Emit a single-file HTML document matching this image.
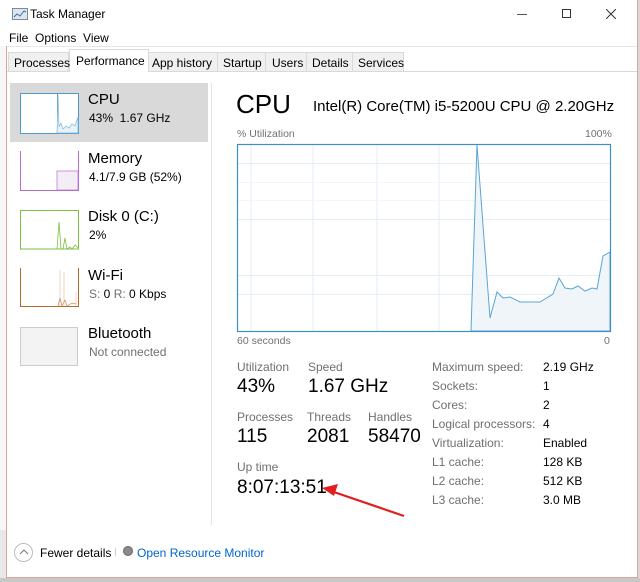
<!DOCTYPE html>
<html><head><meta charset="utf-8"><style>
*{margin:0;padding:0;box-sizing:border-box}
body{width:640px;height:582px;overflow:hidden;background:#fff;font-family:"Liberation Sans",sans-serif;color:#000;position:relative;font-size:12px}
.a{position:absolute;white-space:nowrap}
.g{color:#707070}
</style></head><body>
<!-- outside strips -->
<div class="a" style="left:0;top:46px;width:6px;height:484px;background:#f7f7f7"></div>
<div class="a" style="left:0;top:530px;width:6px;height:52px;background:#e8e8e8"></div>
<div class="a" style="left:6px;top:46px;width:1px;height:532px;background:#e2a595"></div>
<div class="a" style="left:637px;top:0;width:1px;height:578px;background:#e2a595"></div>
<div class="a" style="left:638px;top:0;width:2px;height:582px;background:#d8d8d8"></div>
<div class="a" style="left:6px;top:577px;width:632px;height:1px;background:#e2a595"></div>
<div class="a" style="left:0;top:578px;width:640px;height:4px;background:#c8c8c8"></div>
<!-- title bar -->
<svg class="a" style="left:12px;top:8px" width="16" height="12"><rect x="0.5" y="0.5" width="15" height="11" fill="#dde6ee" stroke="#7a8a99"/><polyline points="2,9 5,6 8,8 12,3 14,4" fill="none" stroke="#3a6ea5"/></svg>
<div class="a" style="left:30px;top:7px;font-size:12px">Task Manager</div>
<div class="a" style="left:517px;top:14px;width:10px;height:1px;background:#555"></div>
<div class="a" style="left:562px;top:9px;width:9px;height:9px;border:1px solid #333"></div>
<svg class="a" style="left:606px;top:9px" width="10" height="10"><path d="M0,0L10,10M10,0L0,10" stroke="#333" stroke-width="1"/></svg>
<div class="a" style="left:9px;top:31px">File&nbsp; Options&nbsp; View</div>
<!-- tabs -->
<div class="a" style="left:7px;top:46px;width:630px;height:1px;background:#e8e8e8"></div>
<div class="a" style="left:7px;top:71px;width:630px;height:1px;background:#d9d9d9"></div>
<div class="a" style="left:8px;top:52px;width:61px;height:19px;background:#f0f0f0;border:1px solid #d9d9d9;border-bottom:0"></div>
<div class="a" style="left:148px;top:52px;width:256px;height:19px;background:#f0f0f0;border:1px solid #d9d9d9;border-bottom:0"></div>
<div class="a" style="left:69px;top:49px;width:80px;height:23px;background:#fff;border:1px solid #d9d9d9;border-bottom:0"></div>
<div class="a" style="left:14px;top:56px">Processes</div>
<div class="a" style="left:76px;top:54px">Performance</div>
<div class="a" style="left:152px;top:56px">App history</div>
<div class="a" style="left:223px;top:56px">Startup</div>
<div class="a" style="left:272px;top:56px">Users</div>
<div class="a" style="left:312px;top:56px">Details</div>
<div class="a" style="left:358px;top:56px">Services</div>
<div class="a" style="left:148px;top:52px;width:1px;height:19px;background:#d9d9d9"></div>
<div class="a" style="left:217px;top:52px;width:1px;height:19px;background:#d9d9d9"></div>
<div class="a" style="left:265px;top:52px;width:1px;height:19px;background:#d9d9d9"></div>
<div class="a" style="left:306px;top:52px;width:1px;height:19px;background:#d9d9d9"></div>
<div class="a" style="left:352px;top:52px;width:1px;height:19px;background:#d9d9d9"></div>
<!-- sidebar -->
<div class="a" style="left:10px;top:83px;width:198px;height:59px;background:#d9d9d9"></div>
<div class="a" style="left:211px;top:83px;width:1px;height:442px;background:#e3e3e3"></div>
<svg class="a" style="left:20px;top:93px" width="59" height="41"><rect x="0.5" y="0.5" width="58" height="40" fill="#fff" stroke="#4a9bd0"/><line x1="37.5" y1="0" x2="37.5" y2="40" stroke="#4a9bd0"/><path d="M37,40L38,2L39,34L41,30L43,36L46,33L49,35L52,31L55,33L58,24L58,40Z" fill="#eaf2f9" stroke="#7ab4dc" stroke-width="0.7"/></svg>
<div class="a" style="left:88px;top:91px;font-size:15px">CPU</div>
<div class="a" style="left:89px;top:111px;font-size:12px">43%&nbsp; 1.67 GHz</div>
<svg class="a" style="left:20px;top:151px" width="59" height="40"><path d="M0.5,0V39.5H58.5V0" fill="none" stroke="#b76cd1"/><rect x="37" y="20" width="21" height="19" fill="#f3eef5" stroke="#b76cd1" stroke-width="0.7"/></svg>
<div class="a" style="left:88px;top:150px;font-size:15px">Memory</div>
<div class="a" style="left:89px;top:170px">4.1/7.9 GB (52%)</div>
<svg class="a" style="left:20px;top:210px" width="59" height="40"><rect x="0.5" y="0.5" width="58" height="38.5" fill="#fff" stroke="#7ac142"/><path d="M37,39L39,12L41,39L43,39L45,28L47,39L50,37L52,39L55,35L58,38" fill="none" stroke="#7ac142" stroke-width="0.8"/></svg>
<div class="a" style="left:88px;top:208px;font-size:15px">Disk 0 (C:)</div>
<div class="a" style="left:89px;top:228px">2%</div>
<svg class="a" style="left:20px;top:268px" width="59" height="40"><path d="M0.5,0V38.5H58.5V0" fill="none" stroke="#b06a2a"/><path d="M40,2V38M44,4V38M56,24V38" stroke="#e8c3a6" stroke-width="0.7"/><path d="M38,38L40,30L42,38L45,32L47,38L52,35L56,36" fill="none" stroke="#c98a5a" stroke-width="0.7"/></svg>
<div class="a" style="left:88px;top:267px;font-size:15px">Wi-Fi</div>
<div class="a" style="left:89px;top:287px"><span class="g">S:</span> 0 <span class="g">R:</span> 0 Kbps</div>
<div class="a" style="left:20px;top:327px;width:58px;height:39px;background:#f3f3f3;border:1px solid #ccc"></div>
<div class="a" style="left:88px;top:325px;font-size:15px">Bluetooth</div>
<div class="a g" style="left:89px;top:345px">Not connected</div>
<!-- main -->
<div class="a" style="left:236px;top:89px;font-size:26px">CPU</div>
<div class="a" style="left:313px;top:98px;font-size:15px">Intel(R) Core(TM) i5-5200U CPU @ 2.20GHz</div>
<div class="a g" style="left:237px;top:128px;font-size:10.5px">% Utilization</div>
<div class="a g" style="left:585px;top:128px;font-size:10.5px">100%</div>
<svg class="a" style="left:236px;top:143px" width="376" height="190">
<g stroke="#e4eef6" stroke-width="1">
<line x1="15" y1="1" x2="15" y2="188"/><line x1="77" y1="1" x2="77" y2="188"/><line x1="141" y1="1" x2="141" y2="188"/><line x1="203" y1="1" x2="203" y2="188"/>
<line x1="1" y1="20.5" x2="374" y2="20.5"/><line x1="1" y1="76.5" x2="374" y2="76.5"/><line x1="1" y1="132.5" x2="374" y2="132.5"/><line x1="1" y1="151.5" x2="374" y2="151.5"/>
<line x1="1" y1="39.5" x2="374" y2="39.5" stroke="#f1f6fa"/><line x1="1" y1="57.5" x2="374" y2="57.5" stroke="#f1f6fa"/>
</g>
<path d="M235,188L241,2L254,175L261,149L267,155L274,154L284,159L304,159L317,151L323,135L329,145L336,146L342,143L349,148L356,145L361,146L367,113L374,109L374,188Z" fill="#f0f5fa" stroke="#5aa5d6" stroke-width="1"/>
<rect x="1.5" y="1.5" width="373" height="187" fill="none" stroke="#3d8fc7" stroke-width="1.2"/>
</svg>
<div class="a g" style="left:237px;top:335px;font-size:10.5px">60 seconds</div>
<div class="a g" style="left:604px;top:335px;font-size:10.5px">0</div>

<div class="a g" style="left:237px;top:360px">Utilization</div>
<div class="a g" style="left:308px;top:360px">Speed</div>
<div class="a" style="left:237px;top:376px;font-size:19px">43%</div>
<div class="a" style="left:308px;top:376px;font-size:19px">1.67 GHz</div>
<div class="a g" style="left:237px;top:410px">Processes</div>
<div class="a g" style="left:307px;top:410px">Threads</div>
<div class="a g" style="left:368px;top:410px">Handles</div>
<div class="a" style="left:237px;top:426px;font-size:19px">115</div>
<div class="a" style="left:307px;top:426px;font-size:19px">2081</div>
<div class="a" style="left:368px;top:426px;font-size:19px">58470</div>
<div class="a g" style="left:237px;top:460px">Up time</div>
<div class="a" style="left:237px;top:477px;font-size:19px">8:07:13:51</div>
<svg class="a" style="left:320px;top:482px" width="90" height="40"><path d="M8,8L84,34" stroke="#e02020" stroke-width="2.2"/><path d="M2,6L18,2L14,14Z" fill="#e02020"/></svg>

<div class="a g" style="left:432px;top:360px">Maximum speed:</div><div class="a" style="left:543px;top:360px">2.19 GHz</div>
<div class="a g" style="left:432px;top:379px">Sockets:</div><div class="a" style="left:543px;top:379px">1</div>
<div class="a g" style="left:432px;top:398px">Cores:</div><div class="a" style="left:543px;top:398px">2</div>
<div class="a g" style="left:432px;top:417px">Logical processors:</div><div class="a" style="left:543px;top:417px">4</div>
<div class="a g" style="left:432px;top:436px">Virtualization:</div><div class="a" style="left:543px;top:436px">Enabled</div>
<div class="a g" style="left:432px;top:455px">L1 cache:</div><div class="a" style="left:543px;top:455px">128 KB</div>
<div class="a g" style="left:432px;top:474px">L2 cache:</div><div class="a" style="left:543px;top:474px">512 KB</div>
<div class="a g" style="left:432px;top:493px">L3 cache:</div><div class="a" style="left:543px;top:493px">3.0 MB</div>
<!-- bottom -->
<div class="a" style="left:14px;top:543px;width:19px;height:19px;border:1px solid #bbb;border-radius:50%"></div>
<svg class="a" style="left:19px;top:549px" width="10" height="6"><path d="M1,5L5,1L9,5" fill="none" stroke="#777"/></svg>
<div class="a" style="left:40px;top:546px">Fewer details</div>
<div class="a" style="left:115px;top:548px;width:1px;height:8px;background:#ccc"></div>
<div class="a" style="left:123px;top:546px;width:10px;height:10px;border-radius:50%;background:#8a8a8a;border:1px solid #666"></div>
<div class="a" style="left:137px;top:546px;color:#0066cc">Open Resource Monitor</div>
</body></html>
